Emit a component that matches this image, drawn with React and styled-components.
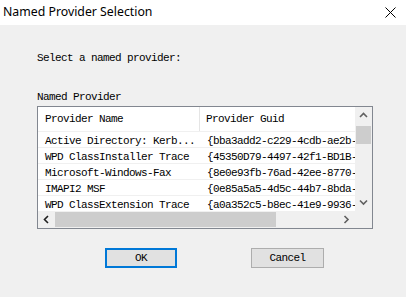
import React from "react";
import styled, { createGlobalStyle } from "styled-components";

const Global = createGlobalStyle`
  html, body { margin: 0; padding: 0; background: #f0f0f0; overflow: hidden; }
  * { box-sizing: border-box; }
`;

const mono = `"Liberation Mono", "DejaVu Sans Mono", monospace`;

const Window = styled.div`
  width: 406px;
  height: 297px;
  display: flex;
  flex-direction: column;
  background: #f0f0f0;
`;

const TitleBar = styled.div`
  height: 25px;
  background: #ffffff;
  display: flex;
  align-items: center;
  justify-content: space-between;
  padding: 0 10px 0 3px;
`;

const Title = styled.div`
  font-family: "Noto Sans", "Open Sans", sans-serif;
  font-size: 12.3px;
  color: #000;
  line-height: 16px;
  margin-top: -1px;
`;

const Body = styled.div`
  display: flex;
  flex-direction: column;
  padding-left: 37px;
`;

const Label = styled.div`
  font-family: ${mono};
  font-size: 11px;
  letter-spacing: -0.6px;
  line-height: 12px;
  color: #000;
  margin-top: ${(p) => p.$top}px;
  white-space: pre;
`;

const ListBox = styled.div`
  margin-top: 3px;
  width: 336px;
  height: 123px;
  border: 1px solid #828790;
  background: #fff;
  display: grid;
  grid-template-columns: 317px 17px;
  grid-template-rows: 104px 17px;
`;

const Content = styled.div`
  overflow: hidden;
  display: flex;
  flex-direction: column;
`;

const Row = styled.div`
  display: grid;
  grid-template-columns: 162px 1fr;
  height: ${(p) => (p.$header ? 24 : 16)}px;
  flex: none;
  border-top: ${(p) => (p.$header ? "none" : "1px solid #f0f0f0")};
`;

const Cell = styled.div`
  font-family: ${mono};
  font-size: 11px;
  letter-spacing: -0.6px;
  color: #000;
  white-space: nowrap;
  overflow: hidden;
  display: flex;
  align-items: center;
  padding-left: ${(p) => p.$pad}px;
  padding-top: ${(p) => (p.$header ? 0 : 2)}px;
  border-right: ${(p) => (p.$divider ? "1px solid #e5e5e5" : "none")};
`;

const VScroll = styled.div`
  background: #f0f0f0;
  display: flex;
  flex-direction: column;
`;

const HScroll = styled.div`
  background: #f0f0f0;
  display: flex;
`;

const Corner = styled.div`
  background: #f0f0f0;
`;

const Arrow = styled.div`
  width: 17px;
  height: 17px;
  flex: none;
  display: flex;
  align-items: center;
  justify-content: center;
`;

const VTrack = styled.div`
  flex: 1;
  display: flex;
  flex-direction: column;
  padding: 2px 0 0 0;
`;

const VThumb = styled.div`
  height: 18px;
  margin: 0 1px;
  background: #cdcdcd;
`;

const HTrack = styled.div`
  flex: 1;
  display: flex;
`;

const HThumb = styled.div`
  width: 221px;
  margin: 1px 0;
  background: #cdcdcd;
`;

const ButtonRow = styled.div`
  display: flex;
  gap: 74px;
  padding-left: 68px;
  margin-top: 19px;
`;

const Button = styled.div`
  width: ${(p) => p.$w}px;
  height: 20px;
  background: #e1e1e1;
  border: ${(p) => (p.$default ? "2px solid #0078d7" : "1px solid #adadad")};
  display: flex;
  align-items: center;
  justify-content: center;
  font-family: ${mono};
  font-size: 11px;
  letter-spacing: -0.6px;
  color: #000;
`;

const Chevron = ({ dir, color = "#606060" }) => {
  const paths = {
    up: "M1 5 L4.5 1.5 L8 5",
    down: "M1 1.5 L4.5 5 L8 1.5",
    left: "M5 1 L1.5 4.5 L5 8",
    right: "M1.5 1 L5 4.5 L1.5 8",
  };
  const vertical = dir === "up" || dir === "down";
  return (
    <svg width={vertical ? 9 : 7} height={vertical ? 7 : 9} viewBox={vertical ? "0 0 9 7" : "0 0 7 9"}>
      <path d={paths[dir]} fill="none" stroke={color} strokeWidth="1.6" />
    </svg>
  );
};

const rows = [
  ["Active Directory: Kerb...", "{bba3add2-c229-4cdb-ae2b-"],
  ["WPD ClassInstaller Trace", "{45350D79-4497-42f1-BD1B-"],
  ["Microsoft-Windows-Fax", "{8e0e93fb-76ad-42ee-8770-"],
  ["IMAPI2 MSF", "{0e85a5a5-4d5c-44b7-8bda-"],
  ["WPD ClassExtension Trace", "{a0a352c5-b8ec-41e9-9936-"],
];

export default function App() {
  return (
    <>
      <Global />
      <Window>
        <TitleBar>
          <Title>Named Provider Selection</Title>
          <svg width="11" height="11" viewBox="0 0 11 11">
            <path d="M0.5 0.5 L10.5 10.5 M10.5 0.5 L0.5 10.5" stroke="#000" strokeWidth="1" />
          </svg>
        </TitleBar>
        <Body>
          <Label $top={27}>Select a named provider:</Label>
          <Label $top={27}>Named Provider</Label>
          <ListBox>
            <Content>
              <Row $header>
                <Cell $header $pad={7} $divider>Provider Name</Cell>
                <Cell $header $pad={6}>Provider Guid</Cell>
              </Row>
              {rows.map(([n, g]) => (
                <Row key={n}>
                  <Cell $pad={7}>{n}</Cell>
                  <Cell $pad={7}>{g}</Cell>
                </Row>
              ))}
            </Content>
            <VScroll>
              <Arrow><Chevron dir="up" /></Arrow>
              <VTrack><VThumb /></VTrack>
              <Arrow><Chevron dir="down" /></Arrow>
            </VScroll>
            <HScroll>
              <Arrow><Chevron dir="left" color="#202020" /></Arrow>
              <HTrack><HThumb /></HTrack>
              <Arrow><Chevron dir="right" /></Arrow>
            </HScroll>
            <Corner />
          </ListBox>
          <ButtonRow>
            <Button $w={72} $default>OK</Button>
            <Button $w={73}>Cancel</Button>
          </ButtonRow>
        </Body>
      </Window>
    </>
  );
}
